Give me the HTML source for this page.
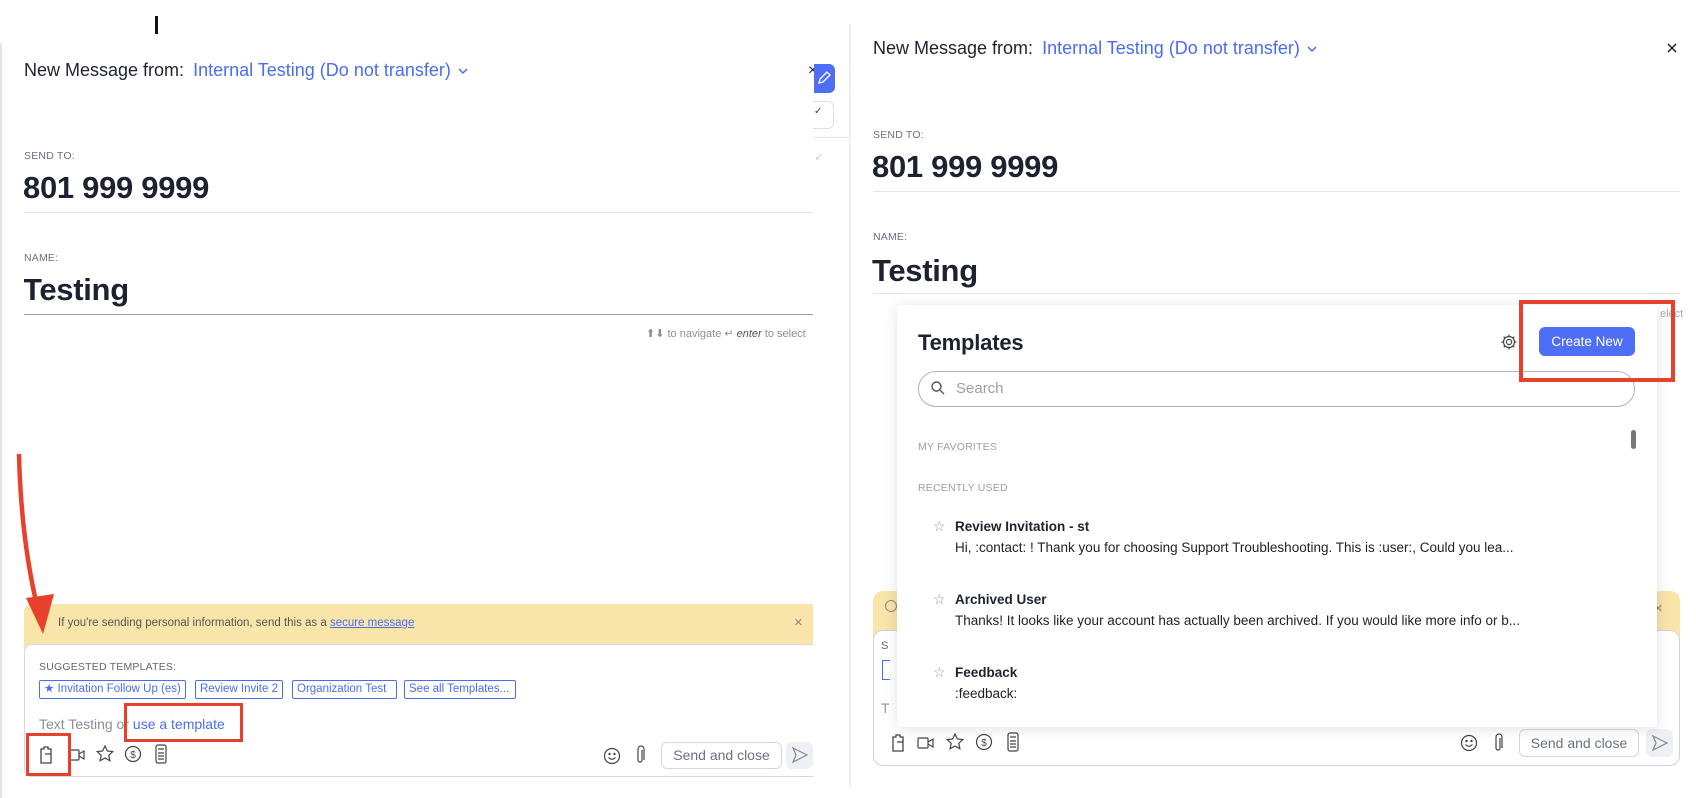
<!DOCTYPE html>
<html><head><meta charset="utf-8">
<style>
*{box-sizing:border-box;margin:0;padding:0}
body{width:1696px;height:798px;background:#fff;font-family:"Liberation Sans",Arial,sans-serif;color:#1e2230;position:relative;overflow:hidden}
.a{position:absolute;white-space:nowrap}
.lbl{font-size:10.5px;color:#6b7080;letter-spacing:.2px}
.big{font-size:31px;font-weight:bold;color:#1e2230;letter-spacing:-.3px}
.blue{color:#4a6cf2}
.chip{position:absolute;top:680px;height:19px;border:1px solid #4a6cf2;border-radius:2px;color:#4a6cf2;font-size:11.5px;line-height:17px;padding:0 4px}
svg{position:absolute}
</style></head><body>

<!-- LEFT PANEL -->
<div class="a" style="left:0;top:43px;width:2px;height:755px;background:#e2e4ea"></div>
<div class="a" style="left:155px;top:16px;width:3px;height:18px;background:#111"></div>
<div class="a" style="left:24px;top:60px;font-size:18px;">New Message from: <span class="blue" style="margin-left:4px">Internal Testing (Do not transfer)</span></div>
<svg style="left:457px;top:66px" width="12" height="10" viewBox="0 0 12 10"><path d="M2 3l4 4 4-4" fill="none" stroke="#4a6cf2" stroke-width="1.5"/></svg>
<div class="a" style="left:808px;top:62px;font-size:16px;">×</div>
<div class="a" style="left:814px;top:64px;width:21px;height:29px;background:#4d6ef5;border-radius:0 6px 6px 0"></div>
<svg style="left:816px;top:70px" width="16" height="16" viewBox="0 0 16 16"><path d="M3 13l1-4 7-7 3 3-7 7z" fill="none" stroke="#fff" stroke-width="1.3"/></svg>
<div class="a" style="left:813px;top:101px;width:21px;height:28px;border:1px solid #dcdfe6;border-left:none;border-radius:0 6px 6px 0"></div>
<div class="a" style="left:814px;top:106px;font-size:10px;color:#333">✓</div>
<div class="a" style="left:814px;top:137px;width:36px;height:1px;background:#e6e8ee"></div>
<div class="a" style="left:814px;top:150px;font-size:12px;color:#c8cbd3">✓</div>
<div class="a" style="left:24px;top:0;width:789px;height:798px;overflow:hidden">
 <div class="a lbl" style="left:0;top:150px">SEND TO:</div>
 <div class="a big" style="left:-1px;top:170px">801 999 9999</div>
 <div class="a" style="left:0;top:212px;width:789px;height:1px;background:#e3e6ee"></div>
 <div class="a lbl" style="left:0;top:252px">NAME:</div>
 <div class="a big" style="left:-1px;top:272px">Testing</div>
 <div class="a" style="left:0;top:314px;width:789px;height:1px;background:#9a9ea8"></div>
 <div class="a" style="left:622px;top:327px;font-size:11px;color:#8a8e99">⬆⬇ to navigate ↵ <i style="color:#555">enter</i> to select</div>
 <!-- banner -->
 <div class="a" style="left:0;top:604px;width:800px;height:48px;background:#f9e4aa;border-radius:8px 0 0 0"></div>
 <div class="a" style="left:34px;top:617px;font-size:11.5px;color:#555">If you're sending personal information, send this as a <span class="blue" style="text-decoration:underline">secure message</span></div>
 <div class="a" style="left:770px;top:614px;font-size:15px;color:#888">×</div>
 <div class="a" style="left:0;top:644px;width:800px;height:133px;background:#fff;border:1px solid #d4d8e0;border-right:none;border-radius:8px 0 0 8px"></div>
 <div class="a lbl" style="left:15px;top:661px;color:#666">SUGGESTED TEMPLATES:</div>
 <div class="a" style="left:15px;top:716px;font-size:14px;color:#8a8e99">Text Testing or <span class="blue">use a template</span></div>
 <div class="a" style="left:637px;top:742px;width:121px;height:27px;border:1px solid #d4d8e0;border-radius:6px;font-size:14px;color:#6b7080;text-align:center;line-height:25px">Send and close</div>
 <div class="a" style="left:762px;top:742px;width:27px;height:27px;background:#eef0f5;border-radius:6px"></div>
 <svg style="left:767px;top:746px" width="18" height="18" viewBox="0 0 18 18"><path d="M2 2l14 7-14 7 3-7z" fill="none" stroke="#888" stroke-width="1.2"/></svg>
</div>
<div class="chip" style="left:39px;width:147px">★ Invitation Follow Up (es)</div>
<div class="chip" style="left:195px;width:88px">Review Invite 2</div>
<div class="chip" style="left:292px;width:105px">Organization Test</div>
<div class="chip" style="left:404px;width:112px">See all Templates...</div>
<!-- left icons -->
<svg style="left:36px;top:745px" width="20" height="20" viewBox="0 0 20 20" fill="none" stroke="#444" stroke-width="1.3"><path d="M5 4h3v-2h4v2h3v14h-10z M9 9h6v9"/></svg>
<svg style="left:68px;top:748px" width="18" height="14" viewBox="0 0 18 14" fill="none" stroke="#444" stroke-width="1.2"><rect x="1" y="2" width="10" height="10" rx="1"/><path d="M11 6l5-3v8l-5-3"/></svg>
<svg style="left:96px;top:745px" width="18" height="18" viewBox="0 0 18 18" fill="none" stroke="#444" stroke-width="1.2"><path d="M9 1l2.4 5 5.4.6-4 3.7 1.1 5.4L9 13l-4.9 2.7 1.1-5.4-4-3.7 5.4-.6z"/></svg>
<svg style="left:124px;top:745px" width="18" height="18" viewBox="0 0 18 18" fill="none" stroke="#444" stroke-width="1.2"><circle cx="9" cy="9" r="7.5"/><text x="9" y="13" font-size="10" text-anchor="middle" fill="#444" stroke="none" font-family="Liberation Sans">$</text></svg>
<svg style="left:154px;top:744px" width="14" height="20" viewBox="0 0 14 20" fill="none" stroke="#444" stroke-width="1.2"><rect x="2" y="1" width="10" height="18" rx="2"/><path d="M4 5h6M4 9h6M4 12h6M4 15h6"/></svg>
<svg style="left:603px;top:747px" width="18" height="18" viewBox="0 0 18 18" fill="none" stroke="#444" stroke-width="1.2"><circle cx="9" cy="9" r="7.5"/><path d="M5.5 10.5q3.5 3.5 7 0"/><circle cx="6.5" cy="7" r=".6"/><circle cx="11.5" cy="7" r=".6"/></svg>
<svg style="left:634px;top:745px" width="12" height="20" viewBox="0 0 12 20" fill="none" stroke="#444" stroke-width="1.2"><path d="M8 5v10a2 2 0 0 1-4 0V4a3 3 0 0 1 6 0v11"/></svg>
<!-- red annotations -->
<svg style="left:0;top:440px" width="80" height="200" viewBox="0 0 80 200"><path d="M19 14 Q21 100 38 170" fill="none" stroke="#e8412b" stroke-width="4.5"/><path d="M26 158 L43 194 L54 154 Z" fill="#e8412b"/></svg>
<div class="a" style="left:26px;top:733px;width:45px;height:43px;border:3px solid #e8412b"></div>
<div class="a" style="left:124px;top:703px;width:119px;height:39px;border:3px solid #e8412b"></div>

<!-- RIGHT PANEL -->
<div class="a" style="left:849px;top:24px;width:2px;height:764px;background:#eef0f5"></div>
<div class="a" style="left:873px;top:38px;font-size:18px;">New Message from: <span class="blue" style="margin-left:4px">Internal Testing (Do not transfer)</span></div>
<svg style="left:1306px;top:44px" width="12" height="10" viewBox="0 0 12 10"><path d="M2 3l4 4 4-4" fill="none" stroke="#4a6cf2" stroke-width="1.5"/></svg>
<svg style="left:1665px;top:41px" width="14" height="14" viewBox="0 0 14 14"><path d="M3 3l8 8M11 3l-8 8" stroke="#222" stroke-width="1.5"/></svg>
<div class="a lbl" style="left:873px;top:129px">SEND TO:</div>
<div class="a big" style="left:872px;top:149px">801 999 9999</div>
<div class="a" style="left:873px;top:191px;width:807px;height:1px;background:#e3e6ee"></div>
<div class="a lbl" style="left:873px;top:231px">NAME:</div>
<div class="a big" style="left:872px;top:253px">Testing</div>
<div class="a" style="left:873px;top:293px;width:807px;height:1px;background:#e3e6ee"></div>
<div class="a" style="left:1660px;top:308px;font-size:11px;color:#aaa">elect</div>
<!-- right compose behind -->
<div class="a" style="left:873px;top:591px;width:807px;height:50px;background:#f9e4aa;border-radius:10px 10px 0 0"></div>
<div class="a" style="left:873px;top:630px;width:807px;height:136px;background:#fff;border:1px solid #cfd3db;border-radius:10px"></div>
<div class="a" style="left:885px;top:600px;width:12px;height:12px;border:1px solid #888;border-radius:50%"></div>
<div class="a" style="left:1654px;top:600px;font-size:15px;color:#888">×</div>
<div class="a" style="left:1519px;top:729px;width:120px;height:28px;border:1px solid #d4d8e0;border-radius:6px;font-size:14px;color:#6b7080;text-align:center;line-height:26px">Send and close</div>
<div class="a" style="left:1646px;top:729px;width:27px;height:28px;background:#eef0f5;border-radius:6px"></div>
<svg style="left:1651px;top:734px" width="18" height="18" viewBox="0 0 18 18"><path d="M2 2l14 7-14 7 3-7z" fill="none" stroke="#888" stroke-width="1.2"/></svg>
<svg style="left:888px;top:733px" width="20" height="20" viewBox="0 0 20 20" fill="none" stroke="#444" stroke-width="1.3"><path d="M5 4h3v-2h4v2h3v14h-10z M9 9h6v9"/></svg>
<svg style="left:917px;top:736px" width="18" height="14" viewBox="0 0 18 14" fill="none" stroke="#444" stroke-width="1.2"><rect x="1" y="2" width="10" height="10" rx="1"/><path d="M11 6l5-3v8l-5-3"/></svg>
<svg style="left:946px;top:733px" width="18" height="18" viewBox="0 0 18 18" fill="none" stroke="#444" stroke-width="1.2"><path d="M9 1l2.4 5 5.4.6-4 3.7 1.1 5.4L9 13l-4.9 2.7 1.1-5.4-4-3.7 5.4-.6z"/></svg>
<svg style="left:975px;top:733px" width="18" height="18" viewBox="0 0 18 18" fill="none" stroke="#444" stroke-width="1.2"><circle cx="9" cy="9" r="7.5"/><text x="9" y="13" font-size="10" text-anchor="middle" fill="#444" stroke="none" font-family="Liberation Sans">$</text></svg>
<svg style="left:1006px;top:732px" width="14" height="20" viewBox="0 0 14 20" fill="none" stroke="#444" stroke-width="1.2"><rect x="2" y="1" width="10" height="18" rx="2"/><path d="M4 5h6M4 9h6M4 12h6M4 15h6"/></svg>
<svg style="left:1460px;top:734px" width="18" height="18" viewBox="0 0 18 18" fill="none" stroke="#444" stroke-width="1.2"><circle cx="9" cy="9" r="7.5"/><path d="M5.5 10.5q3.5 3.5 7 0"/><circle cx="6.5" cy="7" r=".6"/><circle cx="11.5" cy="7" r=".6"/></svg>
<svg style="left:1492px;top:733px" width="12" height="20" viewBox="0 0 12 20" fill="none" stroke="#444" stroke-width="1.2"><path d="M8 5v10a2 2 0 0 1-4 0V4a3 3 0 0 1 6 0v11"/></svg>
<div class="a" style="left:882px;top:660px;width:8px;height:20px;border:1px solid #4a6cf2;border-right:none"></div>
<div class="a" style="left:881px;top:640px;font-size:11px;color:#666">S</div>
<div class="a" style="left:881px;top:700px;font-size:14px;color:#999">T</div>

<!-- templates popup -->
<div class="a" style="left:897px;top:305px;width:760px;height:422px;background:#fff;box-shadow:0 2px 14px rgba(0,0,0,.12);border-radius:4px"></div>
<div class="a" style="left:918px;top:330px;font-size:22px;font-weight:bold;color:#1e2230;letter-spacing:-.2px">Templates</div>
<svg style="left:1500px;top:333px" width="18" height="18" viewBox="0 0 18 18" fill="none" stroke="#444" stroke-width="1.2"><circle cx="9" cy="9" r="2.6"/><path d="M9 1.5v2.2M9 14.3v2.2M1.5 9h2.2M14.3 9h2.2M3.7 3.7l1.6 1.6M12.7 12.7l1.6 1.6M3.7 14.3l1.6-1.6M12.7 5.3l1.6-1.6"/><circle cx="9" cy="9" r="5.5"/></svg>
<div class="a" style="left:1539px;top:327px;width:96px;height:29px;background:#4d6ef5;border-radius:6px;color:#fff;font-size:13.5px;text-align:center;line-height:29px">Create New</div>
<div class="a" style="left:918px;top:371px;width:717px;height:36px;border:1px solid #aeb3bd;border-radius:18px"></div>
<svg style="left:930px;top:380px" width="16" height="16" viewBox="0 0 16 16" fill="none" stroke="#555" stroke-width="1.4"><circle cx="6.5" cy="6.5" r="4.5"/><path d="M10 10l4 4"/></svg>
<div class="a" style="left:956px;top:380px;font-size:15px;color:#9a9ea8">Search</div>
<div class="a" style="left:1631px;top:430px;width:5px;height:19px;background:#777;border-radius:3px"></div>
<div class="a lbl" style="left:918px;top:441px;color:#9a9ea8">MY FAVORITES</div>
<div class="a lbl" style="left:918px;top:482px;color:#9a9ea8">RECENTLY USED</div>
<div class="a" style="left:933px;top:518px;font-size:14px;color:#999">☆</div>
<div class="a" style="left:955px;top:519px;font-size:13.5px;font-weight:bold">Review Invitation - st</div>
<div class="a" style="left:955px;top:540px;font-size:13.5px;color:#222">Hi, :contact: ! Thank you for choosing Support Troubleshooting. This is :user:, Could you lea...</div>
<div class="a" style="left:933px;top:591px;font-size:14px;color:#999">☆</div>
<div class="a" style="left:955px;top:592px;font-size:13.5px;font-weight:bold">Archived User</div>
<div class="a" style="left:955px;top:613px;font-size:13.5px;color:#222">Thanks! It looks like your account has actually been archived. If you would like more info or b...</div>
<div class="a" style="left:933px;top:664px;font-size:14px;color:#999">☆</div>
<div class="a" style="left:955px;top:665px;font-size:13.5px;font-weight:bold">Feedback</div>
<div class="a" style="left:955px;top:686px;font-size:13.5px;color:#222">:feedback:</div>
<div class="a" style="left:1519px;top:300px;width:156px;height:82px;border:4px solid #e8412b"></div>
</body></html>
